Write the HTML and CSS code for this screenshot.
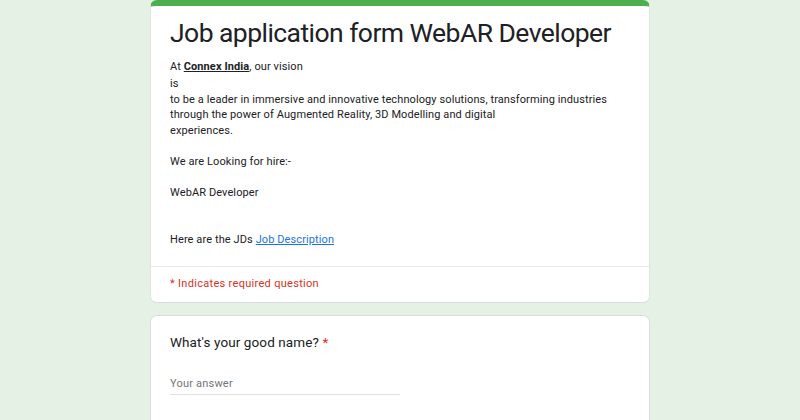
FILE: index.html
```html
<!DOCTYPE html>
<html lang="en">

<head>
  <meta charset="UTF-8" />
  <title>Job application form WebAR Developer</title>
  <link rel="stylesheet" href="styles.css">
</head>

<body>
  <div class="form-wrap">
    <div class="card header-card">
      <div class="header-main">
        <h1>Job application form WebAR Developer</h1>
        <div class="description">
          <div>At <b><u>Connex India</u></b>, our vision</div>
          <div class="gap-after">is</div>
          <div>to be a leader in immersive and innovative technology solutions, transforming industries</div>
          <div>through the power of Augmented Reality, 3D Modelling and digital</div>
          <div>experiences.</div>
          <br>
          <div>We are Looking for hire:-</div>
          <br>
          <div>WebAR Developer</div>
          <br>
          <br>
          <div>Here are the JDs <a href="#">Job Description</a></div>
        </div>
      </div>
      <div class="required-note">* Indicates required question</div>
    </div>

    <div class="card question-card">
      <div class="question-title">What's your good name? <span class="star">*</span></div>
      <div class="answer">Your answer</div>
    </div>
  </div>
</body>

</html>
```

FILE: styles.css
```css
* {
  margin: 0;
  padding: 0;
  box-sizing: border-box;
}

body {
  background: #e4f1e4;
  font-family: Roboto, 'Liberation Sans', sans-serif;
  color: #202124;
  overflow: hidden;
}

.form-wrap {
  width: 500px;
  margin: 0 auto;
  display: flex;
  flex-direction: column;
  gap: 12px;
}

.card {
  background: #ffffff;
  border: 1px solid #dadce0;
  border-radius: 7px;
}

.header-card {
  border-top: 6px solid #4caf50;
  border-left-color: #e0e6e0;
  border-right-color: #e0e6e0;
}

.header-main {
  padding: 10px 19px 18px;
  border-bottom: 1px solid #e8eaed;
}

h1 {
  font-family: Roboto, sans-serif;
  font-weight: 400;
  font-size: 26.5px;
  line-height: 34px;
  letter-spacing: -0.55px;
  white-space: nowrap;
  color: #202124;
  margin-bottom: 9px;
}

.description {
  font-size: 11px;
  line-height: 15.6px;
  letter-spacing: 0.1px;
  color: #202124;
}

.description .gap-after {
  margin-top: 1.5px;
}

.description a {
  color: #1a73e8;
}

.required-note {
  padding: 10px 19px 12px;
  font-size: 11px;
  letter-spacing: 0.3px;
  color: #d93025;
}

.question-card {
  padding: 18px 19px 30px;
  min-height: 120px;
}

.question-title {
  font-size: 13.5px;
  letter-spacing: 0.1px;
  color: #202124;
  margin-bottom: 27px;
}

.star {
  color: #d93025;
}

.answer {
  width: 230px;
  font-size: 11px;
  letter-spacing: 0.2px;
  color: #70757a;
  padding-bottom: 4px;
  border-bottom: 1px solid #e0e0e0;
}
```
